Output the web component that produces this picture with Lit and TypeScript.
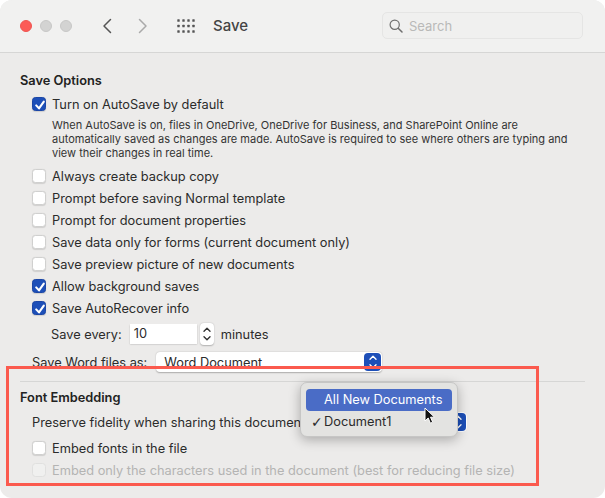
import { LitElement, html, css, svg } from "lit";
import { customElement } from "lit/decorators.js";

const tick = svg`<svg class="tick" viewBox="0 0 14 14"><path d="M3.2 7.4 6 10.4 10.8 3.6" fill="none" stroke="#fff" stroke-width="2.1" stroke-linecap="round" stroke-linejoin="round"/></svg>`;
const updown = (c: string, w = 1.4) => svg`<svg class="ud" viewBox="0 0 14 22"><path d="M4 8.2 7 5.200 10 8.200M4 13.800 7 16.800 10 13.800" fill="none" stroke="${c}" stroke-width="${w}" stroke-linecap="round" stroke-linejoin="round"/></svg>`;

@customElement("app-root")
export class AppRoot extends LitElement {
  static styles = css`
    :host { display: block; width: 605px; height: 498px; position: relative; overflow: hidden; background: #fff;
      font-family: "Inter", "Liberation Sans", sans-serif; font-size: 12.8px; color: #2b2b2b; }
    .win { height: 498px; border-radius: 12px; background: #ecebea; box-sizing: border-box; overflow: hidden; }
    .bar { height: 53px; box-sizing: border-box; background: #f1f1f0; border-bottom: 1px solid #d6d6d5; display: flex; align-items: center; padding: 0 22px 1px 20px; }
    .lights { display: flex; gap: 8px; }
    .dot { width: 12px; height: 12px; border-radius: 50%; background: #d3d3d2; border: 0.5px solid #c8c8c7; box-sizing: border-box; }
    .dot.red { background: #fc5b57; border-color: #ef5551; }
    .nav { width: 12px; height: 18px; display: block; }
    .back { margin-left: 29px; }
    .fwd { margin-left: 24px; }
    .grid { width: 18px; height: 14px; margin-left: 28px; display: block; }
    .title { font-size: 15px; font-weight: 500; color: #444; margin-left: 18px; flex: 1; }
    .search { width: 201px; height: 27px; box-sizing: border-box; border: 1px solid #e5e5e4; border-radius: 5px; background: #f0f0ef; display: flex; align-items: center; gap: 6px; padding-left: 6px; color: #b9b9b8; font-size: 13px; }
    .search svg { width: 14px; height: 14px; }
    .body { padding: 19px 20px 0 20px; }
    .h { font-weight: 600; font-size: 12.8px; line-height: 18px; color: #222; }
    .h.first { margin-bottom: 3px; }
    .row { display: flex; align-items: center; gap: 6px; height: 22px; margin-left: 12px; white-space: nowrap; }
    .box { width: 14px; height: 14px; border-radius: 3.500px; background: #fff; border: 0.5px solid #d0d0cf; box-shadow: 0 0.5px 1px rgba(0,0,0,.12); box-sizing: border-box; flex: none; display: flex; }
    .box.on { background: #1d4fb8; border-color: #1b46a6; }
    .box.off { background: #f0f0ef; box-shadow: none; border-color: #e0e0df; }
    .tick { width: 14px; height: 14px; flex: none; margin: -0.5px; }
    .desc { margin: 3px 0 5px 32px; font-size: 11px; line-height: 14px; color: #333; white-space: nowrap; }
    .dim { color: #b4b4b3; }
    .every { display: flex; align-items: center; height: 24px; margin: 3px 0 0 31px; white-space: nowrap; }
    .num { width: 67px; height: 20px; box-sizing: border-box; margin-left: 8px; background: #fff; box-shadow: 0 0.5px 1.5px rgba(0,0,0,.25); line-height: 20px; padding-left: 4px; }
    .stepper { width: 14px; height: 22px; margin: 0 7px 0 3px; background: #fff; border-radius: 4px; box-shadow: 0 0.5px 1.5px rgba(0,0,0,.25); display: block; }
    .ud { width: 14px; height: 22px; display: block; flex: none; }
    .fmt { display: flex; align-items: center; height: 22px; margin: 5px 0 0 12px; white-space: nowrap; }
    .select { height: 20px; background: #fff; border-radius: 4px; box-shadow: 0 0.5px 1.5px rgba(0,0,0,.28); display: flex; align-items: center; justify-content: space-between; box-sizing: border-box; padding: 0 1px 0 8px; margin-left: 9px; width: 226px; }
    .cap { width: 17px; height: 18px; background: #1d4fb8; border-radius: 4px; display: flex; align-items: center; justify-content: center; overflow: hidden; }
    hr { border: 0; border-top: 1px solid #d6d6d5; margin: 8px 0 7px; }
    .pres { display: flex; align-items: center; height: 22px; margin: 4px 0 4px 12px; white-space: nowrap; }
    .mark { position: absolute; left: 6px; top: 366px; width: 533px; height: 120px; box-sizing: border-box; border: 3px solid #fb5a4e; }
    .cap2 { position: absolute; left: 450px; top: 413px; width: 16px; height: 18px; background: #1d4fb8; border-radius: 4px; box-shadow: 0 0 0 1px #fff; display: flex; align-items: center; justify-content: center; overflow: hidden; }
    .pop { position: absolute; left: 300px; top: 382px; width: 158px; height: 55px; box-sizing: border-box; padding: 5.500px 5px; background: #e3e3e1; border: 0.5px solid #c6c6c5; border-radius: 7px; box-shadow: 0 3px 12px rgba(0,0,0,.28); }
    .item { height: 22px; border-radius: 4px; display: flex; align-items: center; padding-left: 18px; position: relative; color: #2b2b2b; }
    .item.sel { background: #4a6cc6; color: #fff; }
    .item .chk { position: absolute; left: 5px; font-size: 14px; font-weight: 700; font-family: "DejaVu Sans", sans-serif; }
    .cursor { position: absolute; left: 424px; top: 407px; width: 12px; height: 18px; }
  `;

  private cb(label: string, kind = "") {
    return html`<div class="row ${kind === "off" ? "dim" : ""}"><span class="box ${kind}">${kind === "on" ? tick : ""}</span>${label}</div>`;
  }

  render() {
    return html`
      <div class="win">
        <div class="bar">
          <div class="lights"><i class="dot red"></i><i class="dot"></i><i class="dot"></i></div>
          <svg class="nav back" viewBox="0 0 12 18"><path d="M9.500 2.500 3 9l6.500 6.500" fill="none" stroke="#555" stroke-width="1.500" stroke-linecap="round" stroke-linejoin="round"/></svg>
          <svg class="nav fwd" viewBox="0 0 12 18"><path d="M2.500 2.500 9 9l-6.500 6.500" fill="none" stroke="#aaa" stroke-width="1.500" stroke-linecap="round" stroke-linejoin="round"/></svg>
          <svg class="grid" viewBox="0 0 18 14" fill="#555">
            ${[1.5, 7, 12.5].map((y) => [1.5, 6.5, 11.5, 16.5].map((x) => svg`<rect x="${x - 1.2}" y="${y - 1.2}" width="2.400" height="2.400" rx=".5"/>`))}
          </svg>
          <div class="title">Save</div>
          <div class="search">
            <svg viewBox="0 0 14 14"><circle cx="5.700" cy="5.700" r="4.600" fill="none" stroke="#6f6f6e" stroke-width="1.200"/><path d="M9.200 9.200 13 13" stroke="#6f6f6e" stroke-width="1.500" stroke-linecap="round"/></svg>
            Search
          </div>
        </div>
        <div class="body">
          <div class="h first">Save Options</div>
          ${this.cb("Turn on AutoSave by default", "on")}
          <div class="desc">When AutoSave is on, files in OneDrive, OneDrive for Business, and SharePoint Online are<br>automatically saved as changes are made. AutoSave is required to see where others are typing and<br>view their changes in real time.</div>
          ${this.cb("Always create backup copy")}
          ${this.cb("Prompt before saving Normal template")}
          ${this.cb("Prompt for document properties")}
          ${this.cb("Save data only for forms (current document only)")}
          ${this.cb("Save preview picture of new documents")}
          ${this.cb("Allow background saves", "on")}
          ${this.cb("Save AutoRecover info", "on")}
          <div class="every">Save every:<div class="num">10</div><span class="stepper">${updown("#333")}</span>minutes</div>
          <div class="fmt">Save Word files as:<div class="select">Word Document<span class="cap">${updown("#fff")}</span></div></div>
          <hr />
          <div class="h">Font Embedding</div>
          <div class="pres">Preserve fidelity when sharing this document:</div>
          ${this.cb("Embed fonts in the file")}
          ${this.cb("Embed only the characters used in the document (best for reducing file size)", "off")}
        </div>
      </div>
      <div class="mark"></div>
      <span class="cap2">${updown("#fff")}</span>
      <div class="pop">
        <div class="item sel">All New Documents</div>
        <div class="item"><span class="chk">✓</span>Document1</div>
      </div>
      <svg class="cursor" viewBox="0 0 12 18"><path d="M1 1v13l3.200-3 2.200 5.200 2.300-1-2.200-5H10.500Z" fill="#111" stroke="#fff" stroke-width="1"/></svg>
    `;
  }
}
